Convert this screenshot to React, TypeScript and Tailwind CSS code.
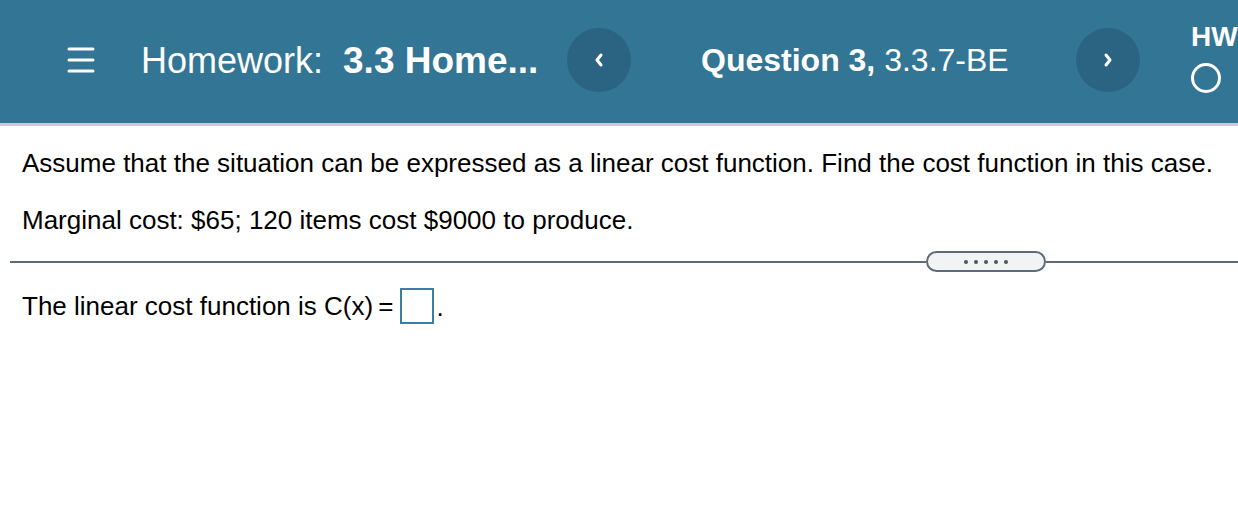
import React from "react";

function Hamburger() {
  return (
    <svg width="28" height="26" viewBox="0 0 28 26" aria-hidden>
      <g stroke="#ffffff" strokeWidth="3" strokeLinecap="round">
        <line x1="2" y1="2" x2="26" y2="2" />
        <line x1="2" y1="13" x2="26" y2="13" />
        <line x1="2" y1="24" x2="26" y2="24" />
      </g>
    </svg>
  );
}

function NavButton({ dir }: { dir: "prev" | "next" }) {
  return (
    <button
      type="button"
      className="flex h-[64px] w-[64px] shrink-0 items-center justify-center rounded-full bg-[#2b6482]"
      aria-label={dir === "prev" ? "前の問題" : "次の問題"}
    >
      <svg width="12" height="16" viewBox="0 0 12 16" aria-hidden>
        <path
          d={dir === "prev" ? "M8 3 L4 8 L8 13" : "M4 3 L8 8 L4 13"}
          fill="none"
          stroke="#ffffff"
          strokeWidth="3"
          strokeLinecap="round"
          strokeLinejoin="round"
        />
      </svg>
    </button>
  );
}

export default function App() {
  return (
    <div className="h-[520px] w-[1238px] overflow-hidden bg-white font-['Liberation_Sans',Arial,sans-serif] text-black">
      {/* ヘッダー */}
      <header className="flex h-[126px] items-center border-b-[3px] border-[#c9cbd8] bg-[#327594] pb-[3px] text-white">
        <div className="ml-[67px] flex w-[28px] shrink-0">
          <Hamburger />
        </div>
        <div className="ml-[46px] w-[400px] shrink-0 whitespace-nowrap text-[36px] leading-none">
          Homework:&nbsp; <span className="text-[37px] font-bold">3.3 Home...</span>
        </div>
        <div className="ml-[26px]">
          <NavButton dir="prev" />
        </div>
        <div className="ml-[70px] w-[375px] shrink-0 whitespace-nowrap text-[32px] leading-none">
          <span className="font-bold">Question 3,</span> 3.3.7-BE
        </div>
        <div>
          <NavButton dir="next" />
        </div>
        <div className="ml-[51px] flex shrink-0 flex-col items-start gap-[12px] pb-[4px]">
          <span className="whitespace-nowrap text-[28px] font-bold leading-none">HW</span>
          <span className="block h-[30px] w-[30px] rounded-full border-[3px] border-white" />
        </div>
      </header>

      {/* 問題文 */}
      <main className="pt-[22px]">
        <p className="pl-[22px] text-[26px] leading-[30px]">
          Assume that the situation can be expressed as a linear cost function. Find the cost function in this case.
        </p>
        <p className="mt-[27px] pl-[22px] text-[26px] leading-[30px]">
          Marginal cost: $65; 120 items cost $9000 to produce.
        </p>

        <div className="mt-[16px] ml-[10px] flex items-center">
          <div className="h-[2px] flex-1 bg-[#5e6b78]" />
          <div className="flex h-[21px] w-[120px] shrink-0 items-center justify-center gap-[6px] rounded-full border-2 border-[#5e6b78] bg-[#f2f3f5]">
            <span className="h-[4px] w-[4px] rounded-full bg-[#4b5560]" />
            <span className="h-[4px] w-[4px] rounded-full bg-[#4b5560]" />
            <span className="h-[4px] w-[4px] rounded-full bg-[#4b5560]" />
            <span className="h-[4px] w-[4px] rounded-full bg-[#4b5560]" />
            <span className="h-[4px] w-[4px] rounded-full bg-[#4b5560]" />
          </div>
          <div className="h-[2px] w-[192px] bg-[#5e6b78]" />
        </div>

        <div className="mt-[16px] flex items-center pl-[22px] text-[26px] leading-[30px]">
          <span className="whitespace-nowrap">The linear cost function is C(x)&thinsp;=</span>
          <span className="ml-[6px] block h-[36px] w-[34px] border-2 border-[#3b7ea1]" />
          <span className="ml-[3px] self-end pb-[2px]">.</span>
        </div>
      </main>
    </div>
  );
}
